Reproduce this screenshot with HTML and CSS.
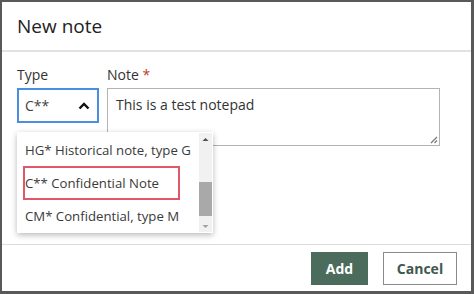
FILE: index.html
```html
<!DOCTYPE html>
<html>
<head>
<meta charset="utf-8">
<link rel="stylesheet" href="styles.css">
</head>
<body>
<div class="dialog">
  <div class="header"><h1 class="title">New note</h1></div>
  <div class="content">
    <div class="field type-field">
      <div class="label">Type</div>
      <div class="select-wrap">
        <div class="select">
          <span class="select-value">C**</span>
          <svg class="chevron" width="12" height="8" viewBox="0 0 12 8"><path d="M1.5 6.5 L6 2 L10.5 6.5" fill="none" stroke="#111" stroke-width="2.4"/></svg>
        </div>
        <div class="dropdown">
          <div class="options">
            <div class="option">HG* Historical note, type G</div>
            <div class="option option-marked"><span class="mark">C** Confidential Note</span></div>
            <div class="option">CM* Confidential, type M</div>
          </div>
          <div class="scrollbar">
            <svg class="arrow" width="13" height="12" viewBox="0 0 13 12"><path d="M3.5 8 L6.5 5 L9.5 8 Z" fill="#505050"/></svg>
            <div class="track-space"></div>
            <div class="thumb"></div>
            <div class="track-space small"></div>
            <svg class="arrow" width="13" height="12" viewBox="0 0 13 12"><path d="M3.5 5 L6.5 8 L9.5 5 Z" fill="#a0a0a0"/></svg>
          </div>
        </div>
      </div>
    </div>
    <div class="field note-field">
      <div class="label">Note <span class="req">*</span></div>
      <div class="textarea">
        <span>This is a test notepad</span>
        <svg class="grip" width="10" height="10" viewBox="0 0 10 10"><path d="M9 3 L3 9 M9 6.5 L6.5 9" stroke="#777" stroke-width="1.2" fill="none"/></svg>
      </div>
    </div>
  </div>
  <div class="footer">
    <button class="btn btn-primary">Add</button>
    <button class="btn btn-secondary">Cancel</button>
  </div>
</div>
</body>
</html>
```
FILE: styles.css
```css
* { box-sizing: border-box; }
html, body { margin: 0; padding: 0; background: #fff; }
body { font-family: "Open Sans", "Noto Sans", sans-serif; color: #333; }
.dialog {
  width: 474px;
  height: 294px;
  border-style: solid;
  border-color: #595959;
  border-width: 2px 3px 3px 2px;
  display: flex;
  flex-direction: column;
  background: #fff;
}
.header {
  height: 50px;
  display: flex;
  align-items: center;
  padding-left: 15px;
  border-bottom: 2px solid #e2e2e2;
  flex: none;
}
.title {
  margin: 0;
  font-size: 19px;
  font-weight: 400;
  color: #222;
  padding-bottom: 1px;
}
.content {
  flex: 1;
  display: flex;
  gap: 8px;
  padding: 13px 0 0 15px;
}
.field { display: flex; flex-direction: column; }
.type-field { width: 82px; }
.note-field { width: 333px; }
.label {
  font-size: 14px;
  line-height: 20px;
  margin-bottom: 3px;
  color: #333;
}
.req { color: #c0392b; }
.select-wrap { position: relative; }
.select {
  height: 35px;
  border: 2px solid #4a8ee0;
  display: flex;
  align-items: center;
  justify-content: space-between;
  padding: 0 7px 0 6px;
  font-size: 14px;
  color: #444;
}
.chevron { display: block; }
.dropdown {
  position: absolute;
  left: 0;
  top: 44px;
  width: 196px;
  height: 101px;
  background: #fff;
  box-shadow: 0 2px 6px rgba(0,0,0,0.28);
  display: flex;
  padding: 1px 1px 1px 0;
  z-index: 2;
}
.options { flex: 1; display: flex; flex-direction: column; }
.option {
  height: 33px;
  display: flex;
  align-items: center;
  padding-left: 8px;
  font-size: 13.2px;
  color: #3a3a3a;
  white-space: nowrap;
}
.option-marked { padding-left: 6px; }
.mark {
  display: flex;
  align-items: center;
  width: 157px;
  height: 34px;
  border: 2px solid #e0576a;
  padding-left: 0;
}
.scrollbar {
  width: 13px;
  background: #f1f1f1;
  display: flex;
  flex-direction: column;
}
.arrow { display: block; flex: none; }
.track-space { height: 37px; flex: none; }
.track-space.small { flex: 1; }
.thumb { height: 34px; background: #a9a9a9; flex: none; }
.textarea {
  position: relative;
  height: 58px;
  border: 1px solid #b3b3b3;
  padding: 6px 0 0 8px;
  font-size: 14px;
  line-height: 20px;
  color: #333;
}
.grip { position: absolute; right: 1px; bottom: 1px; }
.footer {
  flex: none;
  height: 47px;
  border-top: 1px solid #dcdcdc;
  display: flex;
  justify-content: flex-end;
  align-items: flex-start;
  gap: 15px;
  padding: 7px 14px 0 0;
}
.btn {
  height: 33px;
  font-family: "Open Sans", "Noto Sans", sans-serif;
  font-size: 14px;
  font-weight: 700;
  padding: 0;
  cursor: pointer;
}
.btn-primary {
  width: 57px;
  background: #4b6b5c;
  color: #fff;
  border: none;
}
.btn-secondary {
  width: 74px;
  background: #fff;
  color: #3f5850;
  border: 1.5px solid #8a8a8a;
}
```
